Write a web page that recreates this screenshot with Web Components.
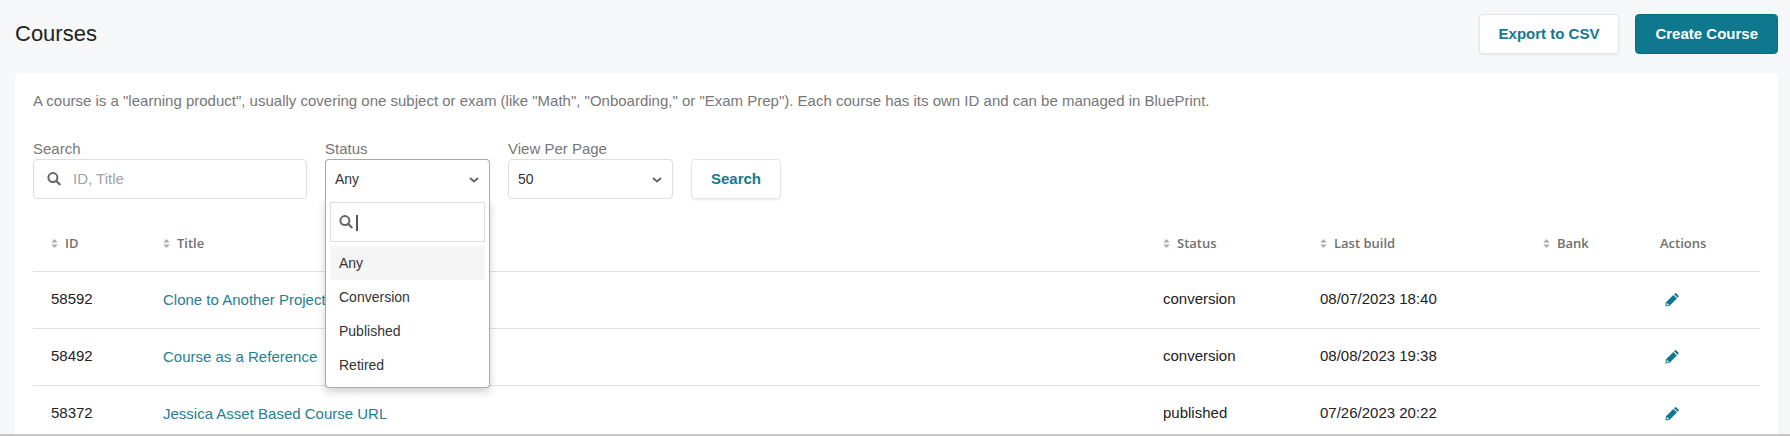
<!DOCTYPE html>
<html lang="en">
<head>
<meta charset="utf-8">
<title>Courses</title>
<style>
  body { margin: 0; font-family: "Liberation Sans", Arial, sans-serif; }
</style>
</head>
<body>
<courses-page></courses-page>
<script>
const define = (name, html, init) => {
  const template = document.createElement('template');
  template.innerHTML = html;
  customElements.define(name, class extends HTMLElement {
    constructor() {
      super();
      this.attachShadow({ mode: 'open' }).append(template.content.cloneNode(true));
    }
    connectedCallback() {
      if (init && !this.ready) { this.ready = true; init(this, this.shadowRoot); }
    }
  });
};

define('search-icon', `
<style>
  :host { display: block; width: 14px; height: 14px; color: #666; }
  svg { display: block; width: 100%; height: 100%; }
</style>
<svg viewBox="0 0 14 14" fill="none" stroke="currentColor" aria-hidden="true">
  <circle cx="5.9" cy="5.6" r="4.5" stroke-width="2"/>
  <path d="M9.3 9 12.6 12.3" stroke-width="2.3" stroke-linecap="round"/>
</svg>`);

define('pencil-icon', `
<style>
  :host { display: block; width: 14px; height: 14px; }
  svg { display: block; width: 100%; height: 100%; }
</style>
<svg viewBox="0 0 14 14" fill="currentColor" aria-hidden="true">
  <path fill-rule="evenodd" d="M1 9.2 8.3 1.9 11.9 5.5 4.6 12.8 0.4 13.6ZM1.9 10.3 1.5 12.4 3.9 12 3.2 10.8Z"/>
  <path d="M9 1.2 9.9.4Q10.6-.2 11.3.4L13.4 2.5Q14 3.2 13.4 3.9L12.6 4.8Z"/>
</svg>`);

define('app-button', `
<style>
  :host { display: block; }
  button {
    box-sizing: border-box; height: 40px; padding: 0 19px; border: 1px solid #e3e5e7; border-radius: 4px;
    background: #fff; color: #12798f; font: bold 15px/20px "Liberation Sans", Arial, sans-serif;
    box-shadow: 0 1px 2px rgba(0,0,0,.08); white-space: nowrap; display: block;
  }
  :host([primary]) button { background: #0f788e; border-color: #0b6c81; color: #fff; box-shadow: none; }
</style>
<button type="button"><slot></slot></button>`);

define('page-header', `
<style>
  :host { display: flex; align-items: center; justify-content: space-between; padding: 14px 12px 19px 15px; }
  h1 { margin: 0; font-size: 22px; line-height: 30px; font-weight: 400; color: #222; }
  div { display: flex; gap: 16px; }
</style>
<h1><slot></slot></h1>
<div><slot name="actions"></slot></div>`);

define('search-field', `
<style>
  :host { display: block; width: 274px; }
  label { display: block; font-size: 15px; line-height: 20px; color: #777; }
  .box { box-sizing: border-box; height: 40px; display: flex; align-items: center; gap: 12px; padding: 0 13px;
    border: 1px solid #ddd; border-radius: 4px; background: #fff; }
  input { flex: 1; min-width: 0; border: 0; outline: 0; padding: 0; background: none; color: #333;
    font: 15px/20px "Liberation Sans", Arial, sans-serif; }
  input::placeholder { color: #a2a2a2; opacity: 1; }
</style>
<label for="q">Search</label>
<div class="box"><search-icon></search-icon><input id="q" type="text" placeholder="ID, Title"></div>`);

define('select-field', `
<style>
  :host { display: block; position: relative; width: 165px; }
  label { display: block; font-size: 15px; line-height: 20px; color: #777; }
  .box { display: grid; align-items: center; }
  select, svg { grid-area: 1 / 1; }
  select { appearance: none; box-sizing: border-box; width: 100%; height: 40px; margin: 0; padding: 0 9px;
    border: 1px solid #ddd; border-radius: 4px; background: #fff; color: #333;
    font: 14px/20px "Liberation Sans", Arial, sans-serif; }
  svg { justify-self: end; width: 10px; height: 6px; margin: 2px 11px 0 0; pointer-events: none; }
  :host([open]) select { border-color: #aaa; border-bottom-color: #fff; border-radius: 4px 4px 0 0; }
</style>
<label for="s"></label>
<div class="box"><select id="s"></select>
<svg viewBox="0 0 10 6" fill="none" stroke="#666" stroke-width="2" aria-hidden="true"><path d="M1 1 5 4.4 9 1"/></svg></div>
<slot></slot>`, (host, root) => {
  root.querySelector('label').textContent = host.getAttribute('label');
  root.querySelector('select').append(...host.getAttribute('options').split(',').map(o => new Option(o)));
});

define('option-menu', `
<style>
  :host { position: absolute; z-index: 1; top: 59px; left: 0; right: 0; box-sizing: border-box; padding: 4px 4px 5px;
    background: #fff; border: 1px solid #aaa; border-top: 0; border-radius: 0 0 4px 4px;
    box-shadow: 0 4px 8px rgba(0,0,0,.18); clip-path: inset(0 -12px -16px -12px); }
  .search { display: flex; align-items: center; gap: 3px; height: 38px; padding: 0 8px; border: 1px solid #ddd; }
  .caret { width: 2px; height: 16px; background: #555; margin-top: 2px; }
  input { flex: 1; min-width: 0; padding: 0; border: 0; outline: 0; background: none; font: 14px/20px "Liberation Sans", Arial, sans-serif; }
  ul { list-style: none; margin: 4px 0 0; padding: 0; }
  li { padding: 0 9px; font-size: 14px; line-height: 34px; color: #333; }
  li[aria-selected=true] { background: #f5f5f5; }
</style>
<div class="search"><search-icon></search-icon><span class="caret"></span><input type="text" aria-label="Filter statuses"></div>
<ul role="listbox" aria-label="Status">
  <li role="option" aria-selected="true">Any</li>
  <li role="option">Conversion</li>
  <li role="option">Published</li>
  <li role="option">Retired</li>
</ul>`);

define('filter-bar', `
<style>
  :host { display: flex; align-items: flex-end; gap: 18px; }
</style>
<slot></slot>`);

define('sort-label', `
<style>
  :host { display: flex; align-items: center; gap: 7px; }
  svg { width: 7px; height: 9px; flex: none; }
</style>
<svg viewBox="0 0 7 9" fill="#aaa" aria-hidden="true"><path d="M3.5 0 6.7 3.6H.3ZM3.5 9 .3 5.4H6.7Z"/></svg><slot></slot>`);

define('course-table', `
<style>
  :host { display: block; }
  table { width: 100%; table-layout: fixed; border-collapse: separate; border-spacing: 0; }
  th, td { box-sizing: border-box; text-align: left; padding: 0 0 2px 18px; border-bottom: 1px solid #e2e2e2; white-space: nowrap; }
  th { height: 55px; font: 600 13px/20px "Open Sans", "Noto Sans", sans-serif; color: #707070; }
  td { height: 57px; font-size: 15px; line-height: 20px; color: #222; }
  td.link { padding-bottom: 0; }
  a { color: #27808f; text-decoration: none; }
  td.edit a { display: block; width: 14px; margin-left: 5px; color: #0f788e; }
  .id { width: 112px; } .status { width: 157px; } .build { width: 223px; } .bank { width: 117px; } .actions { width: 118px; }
</style>
<table>
  <thead><tr>
    <th class="id"><sort-label>ID</sort-label></th><th><sort-label>Title</sort-label></th>
    <th class="status"><sort-label>Status</sort-label></th><th class="build"><sort-label>Last build</sort-label></th>
    <th class="bank"><sort-label>Bank</sort-label></th><th class="actions">Actions</th>
  </tr></thead>
  <tbody></tbody>
</table>`, (host, root) => {
  root.querySelector('tbody').innerHTML = [
    ['58592', 'Clone to Another Project', 'conversion', '08/07/2023 18:40'],
    ['58492', 'Course as a Reference', 'conversion', '08/08/2023 19:38'],
    ['58372', 'Jessica Asset Based Course URL', 'published', '07/26/2023 20:22']
  ].map(([id, title, status, build]) => `<tr><td>${id}</td><td class="link"><a href="#${id}">${title}</a></td>
    <td>${status}</td><td>${build}</td><td></td>
    <td class="link edit"><a href="#edit-${id}" aria-label="Edit"><pencil-icon></pencil-icon></a></td></tr>`).join('');
});

define('content-card', `
<style>
  :host { display: block; flex: 1; margin: 0 12px 0 15px; padding: 18px 18px 0; background: #fff; border-radius: 5px 5px 0 0; }
  p { margin: 0 0 28px; font-size: 15px; line-height: 20px; color: #777; }
  .filters { margin-bottom: 18px; }
</style>
<p><slot name="intro"></slot></p>
<div class="filters"><slot name="filters"></slot></div>
<slot></slot>`);

define('courses-page', `
<style>
  :host { display: flex; flex-direction: column; box-sizing: border-box; height: 100vh; overflow: hidden;
    background: #f5f7f9; border-bottom: 2px solid #c8c8c8; }
</style>
<page-header>Courses
  <app-button slot="actions">Export to CSV</app-button>
  <app-button slot="actions" primary>Create Course</app-button>
</page-header>
<content-card>
  <span slot="intro">A course is a "learning product", usually covering one subject or exam (like "Math", "Onboarding," or "Exam Prep"). Each course has its own ID and can be managed in BluePrint.</span>
  <filter-bar slot="filters">
    <search-field></search-field>
    <select-field label="Status" options="Any,Conversion,Published,Retired" open><option-menu></option-menu></select-field>
    <select-field label="View Per Page" options="50,100"></select-field>
    <app-button>Search</app-button>
  </filter-bar>
  <course-table></course-table>
</content-card>`);
</script>
</body>
</html>
